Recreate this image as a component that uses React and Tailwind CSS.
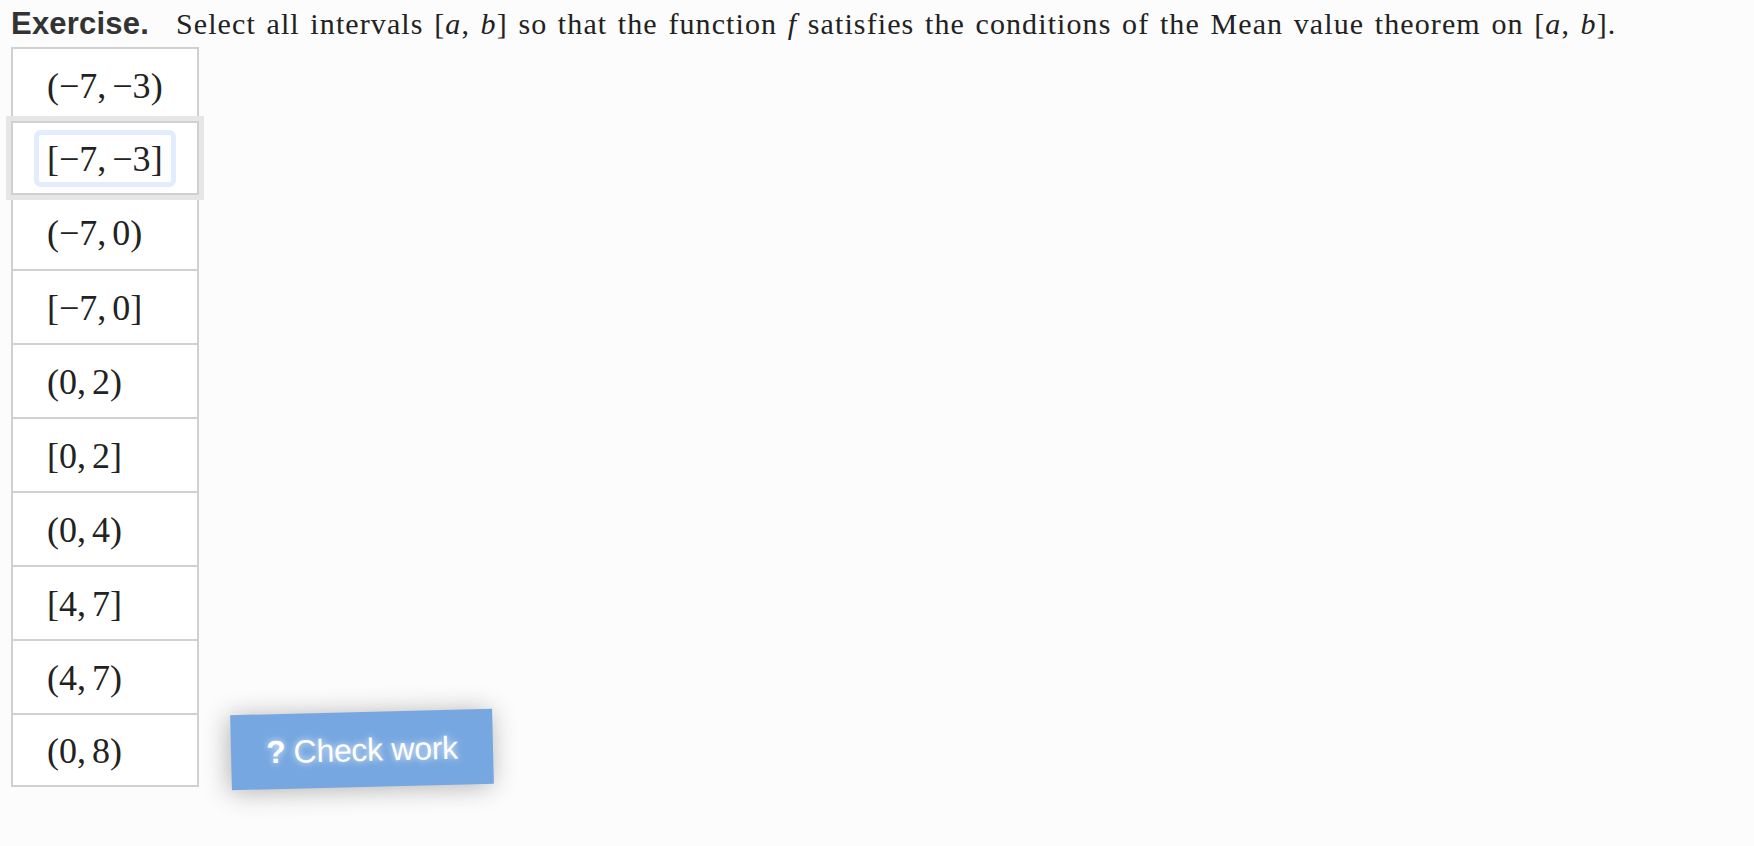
import React from 'react';

const rows = [
  { open: '(', a: '−7', b: '−3', close: ')' },
  { open: '[', a: '−7', b: '−3', close: ']', focus: true },
  { open: '(', a: '−7', b: '0', close: ')' },
  { open: '[', a: '−7', b: '0', close: ']' },
  { open: '(', a: '0', b: '2', close: ')' },
  { open: '[', a: '0', b: '2', close: ']' },
  { open: '(', a: '0', b: '4', close: ')' },
  { open: '[', a: '4', b: '7', close: ']' },
  { open: '(', a: '4', b: '7', close: ')' },
  { open: '(', a: '0', b: '8', close: ')' },
];

const serif = { fontFamily: '"Liberation Serif", "Times New Roman", serif' };
const sans = { fontFamily: '"Liberation Sans", Arial, sans-serif' };

function Interval({ r }) {
  return (
    <span className="whitespace-nowrap" style={serif}>
      {r.open}{r.a},<span className="inline-block w-[6px]" />{r.b}{r.close}
    </span>
  );
}

export default function App() {
  return (
    <div className="min-h-screen bg-[#fcfcfc] text-[#222] pl-[11px] pt-[6px]">
      {/* prompt */}
      <p className="flex items-baseline whitespace-nowrap leading-[36px]">
        <span className="text-[31px] font-bold text-[#333] tracking-[0.2px]" style={sans}>
          Exercise.
        </span>
        <span className="ml-[27px] text-[30px] tracking-[1.1px] [word-spacing:2px]" style={serif}>
          Select all intervals [<i>a</i>, <i>b</i>] so that the function <i>f</i> satisfies the conditions of the Mean value theorem on [<i>a</i>, <i>b</i>].
        </span>
      </p>

      <div className="mt-[5px] flex items-end">
        {/* choices */}
        <div className="w-[188px] bg-white">
          {rows.map((r, i) => (
            <div
              key={i}
              className={`flex items-center h-[74px] border-x-2 border-[#d0d0d0] bg-white pl-[21px] ${
                r.focus ? 'relative z-10 border-y-2 shadow-[0_0_0_5px_#e6e6e6]' : i === 2 ? '' : 'border-t-2'
              } ${i === rows.length - 1 ? 'border-b-2' : ''}`}
            >
              <span
                className={`rounded-[7px] border-[5px] px-[8px] py-[4px] text-[36px] leading-[38px] ${
                  r.focus ? 'border-[#e3ecfc]' : 'border-transparent'
                }`}
              >
                <Interval r={r} />
              </span>
            </div>
          ))}
        </div>

        {/* check */}
        <button
          className="ml-[32px] mb-[0px] h-[75px] w-[262px] -rotate-[1.4deg] bg-[#76a7e0] text-white shadow-[-2px_2px_26px_rgba(0,0,0,0.3)] flex items-center justify-center gap-[8px] text-[32px] tracking-[-0.3px]"
          style={{ ...sans, textShadow: '0 0 7px rgba(255,255,255,0.85)' }}
        >
          <span className="font-bold">?</span>
          <span>Check work</span>
        </button>
      </div>
    </div>
  );
}
